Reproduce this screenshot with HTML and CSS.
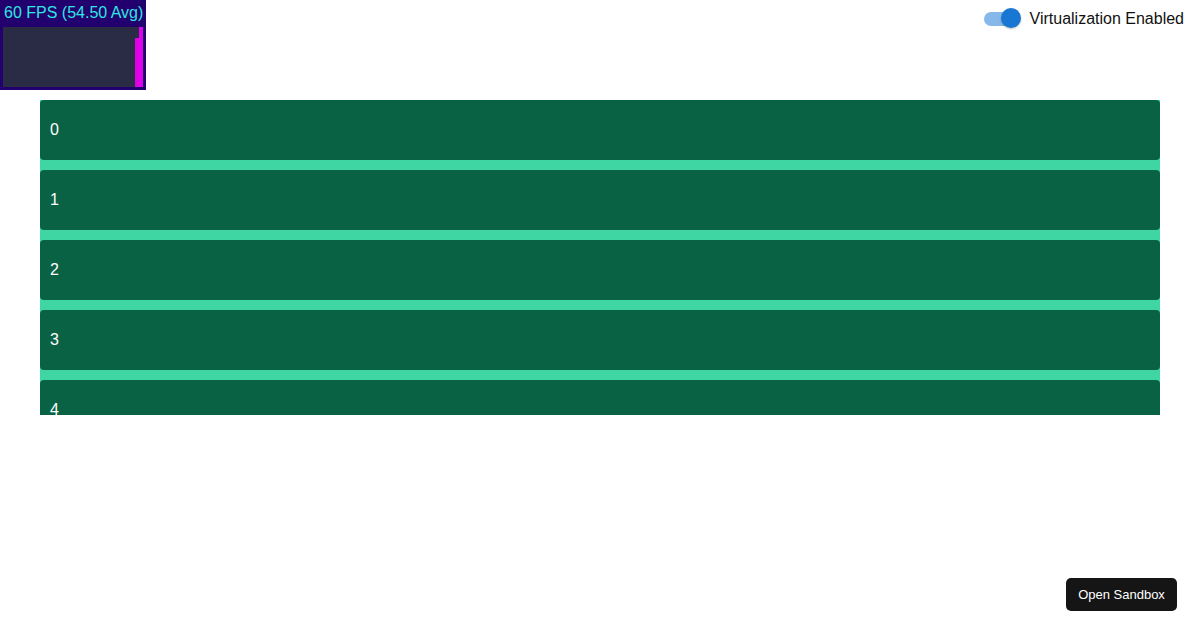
FILE: index.html
```html
<!DOCTYPE html>
<html>
<head>
<meta charset="utf-8">
<link rel="stylesheet" href="styles.css">
</head>
<body>
<div class="fps">
  <div class="fps-text">60 FPS (54.50 Avg)</div>
  <div class="fps-graph">
    <div class="bar bar-a" style="height:49px"></div>
    <div class="bar bar-b" style="height:60px"></div>
  </div>
</div>
<header class="top">
  <label class="switch">
    <span class="track"></span>
    <span class="thumb"></span>
  </label>
  <span class="switch-label">Virtualization Enabled</span>
</header>
<main class="list">
  <div class="item">0</div>
  <div class="item">1</div>
  <div class="item">2</div>
  <div class="item">3</div>
  <div class="item">4</div>
</main>
<button class="sandbox">Open Sandbox</button>
</body>
</html>
```
FILE: styles.css
```css
html, body {
  margin: 0;
  padding: 0;
  background: #ffffff;
  font-family: "Liberation Sans", Arial, sans-serif;
}
body {
  width: 1200px;
  height: 630px;
  overflow: hidden;
  position: relative;
}
.fps {
  position: absolute;
  left: 0;
  top: 0;
  width: 146px;
  height: 90px;
  background: #22006d;
  box-sizing: border-box;
  padding: 0 3px 3px 3px;
  display: flex;
  flex-direction: column;
  z-index: 5;
}
.fps-text {
  color: #2fe6e0;
  font-size: 16px;
  line-height: 25px;
  height: 27px;
  white-space: nowrap;
  margin-left: 1px;
}
.fps-graph {
  flex: 1;
  background: #2a2b45;
  display: flex;
  justify-content: flex-end;
  align-items: flex-end;
}
.bar {
  background: #df00ea;
}
.bar-a { width: 4px; }
.bar-b { width: 4px; }
.top {
  display: flex;
  justify-content: flex-end;
  align-items: center;
  height: 37px;
  padding-right: 16px;
  gap: 9px;
}
.switch {
  position: relative;
  width: 37px;
  height: 20px;
  display: block;
}
.track {
  position: absolute;
  left: 0;
  top: 3px;
  width: 34px;
  height: 14px;
  border-radius: 7px;
  background: #86b8ea;
}
.thumb {
  position: absolute;
  left: 17px;
  top: -1px;
  width: 20px;
  height: 20px;
  border-radius: 50%;
  background: #1976d2;
  box-shadow: 0 1px 2px rgba(0,0,0,0.25);
}
.switch-label {
  font-size: 16px;
  color: #111;
}
.list {
  margin: 63px 40px 0 40px;
  height: 315px;
  overflow: hidden;
  background: #3fd6a4;
  display: flex;
  flex-direction: column;
  gap: 10px;
}
.item {
  flex: 0 0 60px;
  box-sizing: border-box;
  background: #096244;
  border-radius: 4px;
  color: #ffffff;
  font-size: 16px;
  display: flex;
  align-items: center;
  padding: 0 0 1px 10px;
}
.sandbox {
  position: absolute;
  right: 23px;
  bottom: 19px;
  width: 111px;
  height: 33px;
  background: #151515;
  color: #fff;
  border: 0;
  border-radius: 5px;
  font-family: "Liberation Sans", Arial, sans-serif;
  font-size: 13px;
  padding: 0;
}
```
